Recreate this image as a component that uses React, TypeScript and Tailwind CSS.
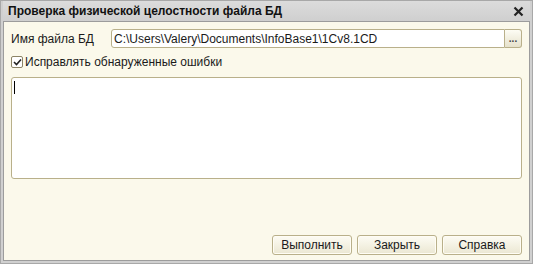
import React from "react";

function Btn({ label }: { label: string }) {
  return (
    <button className="h-[20px] w-[80px] rounded-[3px] border border-[#b9b08a] bg-gradient-to-b from-[#fdfcf4] to-[#ebe7d2] text-[12px] text-[#1a1a1a] shadow-[inset_0_0_0_1px_#fffdf4]">
      {label}
    </button>
  );
}

export default function App() {
  return (
    <div className="h-[264px] w-[533px] bg-[#a8a8a8] p-[1px] font-['Liberation_Sans',Arial,sans-serif] text-[12px] text-[#1a1a1a]">
      <div className="flex h-full flex-col border-x-[2px] border-b-[2px] border-[#d0d0d0] bg-[#d3d3d3]">
        {/* ── Title bar ── */}
        <div className="flex h-[20px] items-center justify-between bg-gradient-to-b from-[#dcdcdc] to-[#cfcfcf] pl-[5px] pr-[6px]">
          <span className="text-[12px] font-bold text-[#111]">
            Проверка физической целостности файла БД
          </span>
          <svg width="11" height="11" viewBox="0 0 11 11">
            <path d="M1.5 1.5 L9.5 9.5 M9.5 1.5 L1.5 9.5" stroke="#222" strokeWidth="2.2" />
          </svg>
        </div>

        {/* ── Body ── */}
        <div className="flex flex-1 flex-col border border-[#9c9c9c] bg-[#fbf9eb] px-[7px] pt-[7px] pb-[5px]">
          <div className="flex h-[19px] items-center">
            <span className="w-[100px]">Имя файла БД</span>
            <div className="flex h-[19px] flex-1 items-center rounded-l-[3px] border border-[#b9b08a] bg-white px-[2px]">
              C:\Users\Valery\Documents\InfoBase1\1Cv8.1CD
            </div>
            <div className="flex h-[19px] w-[17px] items-end justify-center rounded-r-[3px] border border-l-0 border-[#b9b08a] bg-gradient-to-b from-[#fdfcf4] to-[#e6e2cc] pb-[3px] text-[10px] font-bold leading-none text-[#444]">
              ...
            </div>
          </div>

          <div className="mt-[7px] flex h-[14px] items-center gap-[2px]">
            <div className="flex h-[12px] w-[12px] items-center justify-center rounded-[2px] border border-[#8c8466] bg-white">
              <svg width="9" height="8" viewBox="0 0 9 8">
                <path d="M1 4 L3.5 6.5 L8 1.5" stroke="#222" strokeWidth="1.6" fill="none" />
              </svg>
            </div>
            <span>Исправлять обнаруженные ошибки</span>
          </div>

          <div className="mt-[8px] h-[102px] rounded-[3px] border border-[#b9b08a] bg-white pl-[2px] pt-[3px]">
            <div className="h-[13px] w-[1px] bg-black" />
          </div>

          <div className="mt-auto flex justify-end gap-[5px]">
            <Btn label="Выполнить" />
            <Btn label="Закрыть" />
            <Btn label="Справка" />
          </div>
        </div>
      </div>
    </div>
  );
}
